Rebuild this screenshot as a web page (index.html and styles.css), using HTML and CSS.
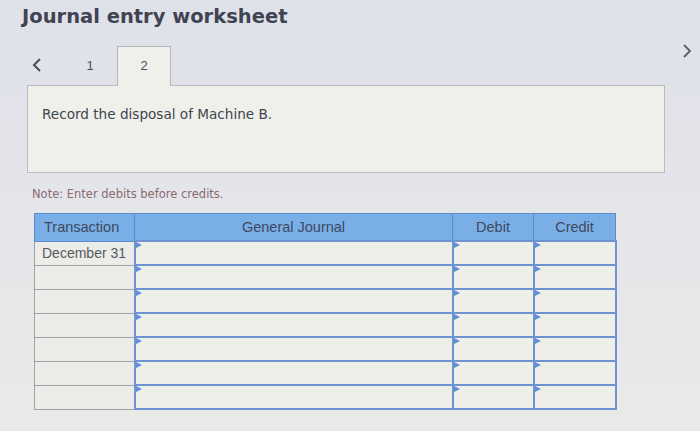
FILE: index.html
```html
<!DOCTYPE html>
<html>
<head>
<meta charset="utf-8">
<link rel="stylesheet" href="styles.css">
</head>
<body>
<div class="page">
  <h1 class="title">Journal entry worksheet</h1>
  <div class="tabs">
    <span class="nav prev"><svg width="14" height="16" viewBox="0 0 14 16"><path d="M10 2 L4 8 L10 14" fill="none" stroke="#4a4e5c" stroke-width="2"/></svg></span>
    <span class="tab first">1</span>
    <span class="tab active">2</span>
    <span class="spacer"></span>
    <span class="nav next"><svg width="12" height="16" viewBox="0 0 12 16"><path d="M3 2 L9 8 L3 14" fill="none" stroke="#5a5f70" stroke-width="1.8"/></svg></span>
  </div>
  <div class="panel">
    <p class="prompt">Record the disposal of Machine B.</p>
  </div>
  <p class="note">Note: Enter debits before credits.</p>
  <table class="journal">
    <thead>
      <tr>
        <th class="c-trans">Transaction</th>
        <th class="c-gj">General Journal</th>
        <th class="c-debit">Debit</th>
        <th class="c-credit">Credit</th>
      </tr>
    </thead>
    <tbody>
      <tr><td class="trans">December 31</td><td class="in"></td><td class="in"></td><td class="in"></td></tr>
      <tr><td class="trans"></td><td class="in"></td><td class="in"></td><td class="in"></td></tr>
      <tr><td class="trans"></td><td class="in"></td><td class="in"></td><td class="in"></td></tr>
      <tr><td class="trans"></td><td class="in"></td><td class="in"></td><td class="in"></td></tr>
      <tr><td class="trans"></td><td class="in"></td><td class="in"></td><td class="in"></td></tr>
      <tr><td class="trans"></td><td class="in"></td><td class="in"></td><td class="in"></td></tr>
      <tr><td class="trans"></td><td class="in"></td><td class="in"></td><td class="in"></td></tr>
    </tbody>
  </table>
</div>
</body>
</html>
```
FILE: styles.css
```css
html, body {
  margin: 0;
  padding: 0;
}
body {
  width: 700px;
  height: 431px;
  overflow: hidden;
  background: linear-gradient(180deg, #dfe1e9 0%, #e4e5ea 45%, #eaeae8 100%);
  font-family: "DejaVu Sans", Verdana, sans-serif;
}
.page {
  padding: 5px 0 0 27px;
}
.title {
  margin: 0 0 0 -5px;
  font-size: 19.5px;
  line-height: 24px;
  font-weight: bold;
  color: #3f4352;
}
.tabs {
  display: flex;
  align-items: center;
  height: 40px;
  margin-top: 17px;
  margin-bottom: -1px;
  position: relative;
  z-index: 1;
}
.nav {
  display: flex;
  align-items: center;
}
.prev {
  width: 20px;
  margin-left: 3px;
  margin-top: -3px;
}
.next {
  align-self: flex-start;
  margin-top: -3px;
  margin-right: 7px;
}
.spacer {
  flex: 1;
}
.tab {
  display: flex;
  align-items: center;
  justify-content: center;
  height: 40px;
  box-sizing: border-box;
  font-family: "Liberation Sans", Arial, sans-serif;
  font-size: 13px;
  color: #4a4e5a;
  padding-bottom: 2px;
}
.tab.first {
  width: 67px;
  padding-left: 13px;
}
.tab.active {
  width: 54px;
  background: #eff0ea;
  border: 1px solid #b4b7bc;
  border-bottom: none;
}
.panel {
  width: 638px;
  height: 88px;
  box-sizing: border-box;
  background: #eff0e9;
  border: 1px solid #b9bbc0;
}
.prompt {
  margin: 20px 0 0 14px;
  font-size: 13.6px;
  color: #3f4450;
}
.note {
  margin: 14px 0 0 5px;
  font-size: 11.5px;
  line-height: 14px;
  color: #8a6b70;
}
.journal {
  margin: 12px 0 0 7px;
  border-collapse: collapse;
  font-family: "Liberation Sans", Arial, sans-serif;
  font-size: 14.5px;
}
.journal th {
  height: 26px;
  padding: 0;
  background: #7aaee6;
  border: 1px solid #5b8acb;
  color: #3d4a5f;
  font-weight: normal;
}
.c-trans {
  width: 100px;
  text-align: left;
  padding-left: 9px !important;
  box-sizing: border-box;
}
.c-gj {
  width: 317px;
}
.c-debit {
  width: 80px;
}
.c-credit {
  width: 81px;
}
.journal td {
  height: 22px;
  padding: 0;
}
.trans {
  background: #ecece8;
  border: 1px solid #9da1a8;
  color: #555a62;
  font-size: 14px;
  padding-left: 7px !important;
}
.in {
  position: relative;
  background: #efefe9;
  border: 2px solid #6f93d2;
}
.in::before {
  content: "";
  position: absolute;
  left: 0;
  top: 0;
  border-left: 6px solid #5f8fd6;
  border-top: 3px solid transparent;
  border-bottom: 3px solid transparent;
}
```
